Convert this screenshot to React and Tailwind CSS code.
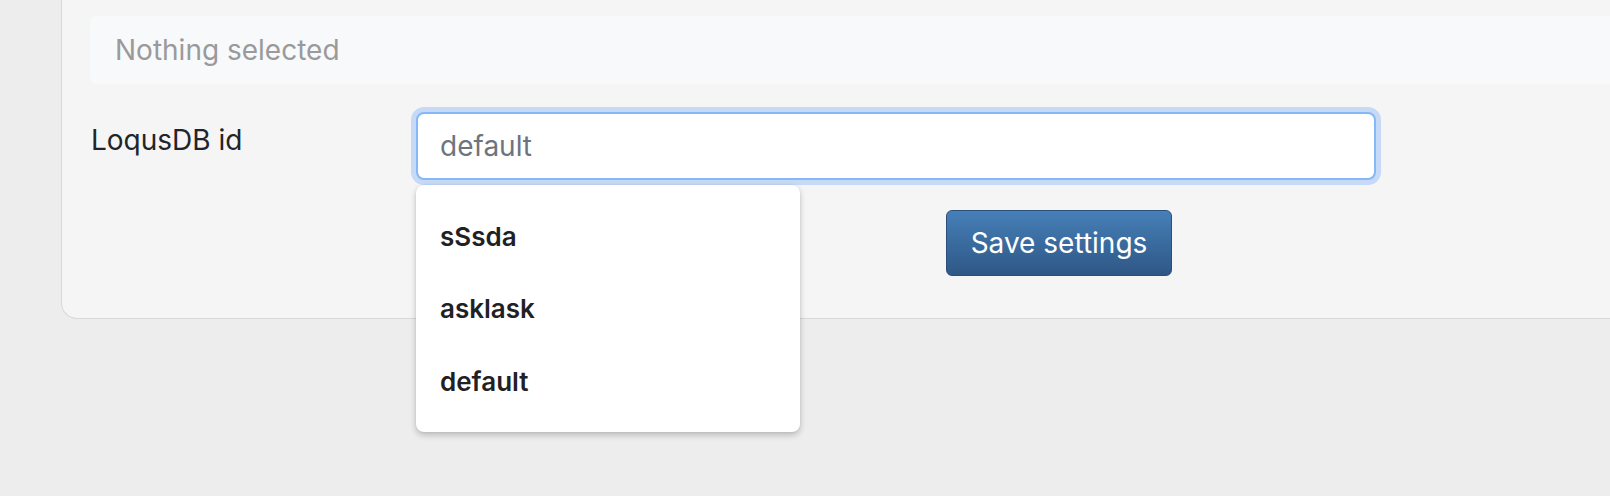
import React from "react";

export default function App() {
  const items = ["sSsda", "asklask", "default"];
  return (
    <div
      className="w-[1610px] h-[496px] overflow-hidden bg-[#ededed] text-[#212529]"
      style={{ fontFamily: "Inter, 'Noto Sans', 'Liberation Sans', sans-serif" }}
    >
      <div className="ml-[61px] w-[1600px] bg-[#f5f5f5] border-l-[1.5px] border-b-[1.5px] border-[#d8d8d8] rounded-bl-[16px] pt-[16px] pb-[42px] pl-[28px]">
        <div className="h-[68px] bg-[#f8f9fa] rounded-l-[6px] flex items-center pl-[25px] text-[28px] text-[#9a9a9a]">
          Nothing selected
        </div>
        <div className="flex mt-[28px]">
          <div className="w-[326px] pt-[7px] pl-[1px] text-[28px] leading-[42px]">LoqusDB id</div>
          <div className="relative flex flex-col">
            <div className="w-[960px] h-[68px] bg-white border-2 border-[#86b7f7] rounded-[8px] shadow-[0_0_0_5px_#c6d9f6] flex items-center pl-[22px] text-[28px] text-[#6c757d]">
              default
            </div>
            <div className="absolute left-0 top-[73px] w-[384px] bg-white rounded-[8px] shadow-[0_3px_6px_rgba(0,0,0,0.22),0_0_2px_rgba(0,0,0,0.08)] pt-[15px] pb-[14px] z-10">
              {items.map((t) => (
                <div key={t} className="h-[72.5px] flex items-center pl-[24px] text-[26px] font-semibold text-[#1f2124]">
                  {t}
                </div>
              ))}
            </div>
            <button className="self-start ml-[530px] mt-[30px] w-[226px] h-[66px] rounded-[6px] border border-[#2b4f78] bg-gradient-to-b from-[#4680b8] to-[#2f5786] text-white text-[28px] flex items-center justify-center">
              Save settings
            </button>
          </div>
        </div>
      </div>
    </div>
  );
}
